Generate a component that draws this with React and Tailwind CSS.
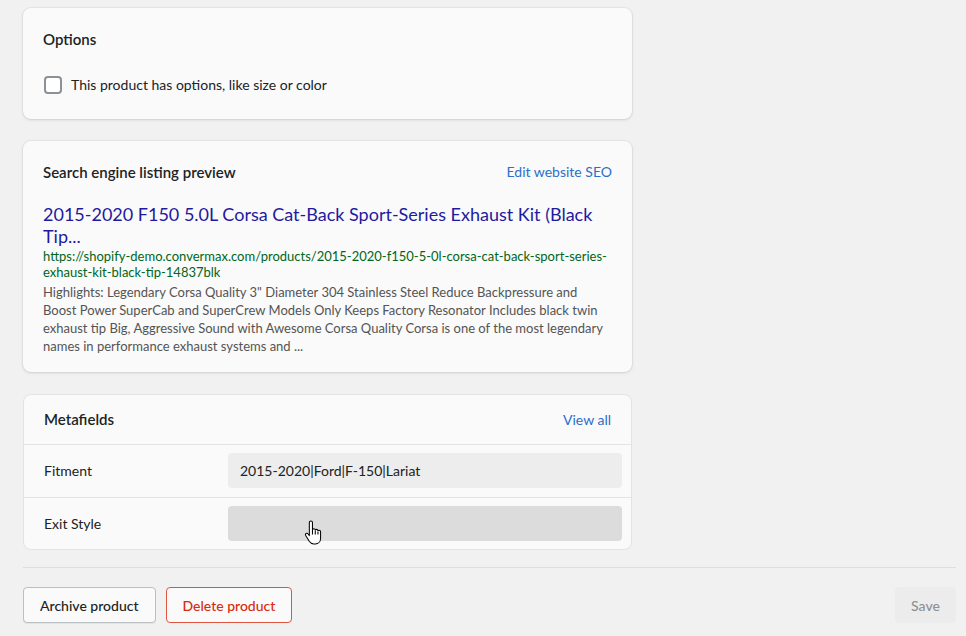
import { useState } from 'react'

const font = { fontFamily: 'Lato, "Noto Sans", sans-serif' }

function Card({ children, className = '' }) {
  return (
    <div className={`rounded-lg bg-[#fafafa] shadow-[0_0_0_1px_rgba(63,63,68,0.05),0_1px_3px_0_rgba(63,63,68,0.15)] ${className}`}>
      {children}
    </div>
  )
}

function HandCursor({ className }) {
  return (
    <svg className={className} width="19" height="26" viewBox="0 0 18 25">
      <path
        d="M6.5 1c.9 0 1.5.6 1.5 1.5V9c.3-.4.8-.6 1.3-.6.8 0 1.3.5 1.4 1.1.3-.3.7-.5 1.2-.5.8 0 1.3.6 1.4 1.2.3-.2.6-.3 1-.3.9 0 1.5.7 1.5 1.5V17.5c0 3-2 5.5-5 5.5H9.2c-2 0-3.3-1-4.3-2.5L1.5 15c-.5-.8-.3-1.6.3-2 .7-.4 1.5-.2 2 .5L5 15V2.5C5 1.6 5.6 1 6.5 1z"
        fill="#fff"
        stroke="#000"
        strokeWidth="1"
        strokeLinejoin="round"
      />
      <path d="M8 9v5M10.7 10v4M13.3 11v3" stroke="#000" strokeWidth="1" />
    </svg>
  )
}

export default function App() {
  const [hasOptions, setHasOptions] = useState(false)

  return (
    <div className="min-h-[636px] w-[966px] bg-[#f1f1f1] text-[#202223]" style={font}>
      <div className="w-[609px] ml-[23px] pt-[8px] flex flex-col gap-[22px]">
        {/* Options */}
        <Card className="px-5 pt-[21px] pb-[24px]">
          <h2 className="text-[15px] font-semibold leading-5">Options</h2>
          <label className="mt-[26px] flex items-center gap-[9px] text-[14px] leading-5 cursor-pointer">
            <input
              type="checkbox"
              checked={hasOptions}
              onChange={e => setHasOptions(e.target.checked)}
              className="appearance-none w-[18px] h-[18px] rounded-[4px] border-2 border-[#8c9196] bg-white ml-[1px]"
            />
            This product has options, like size or color
          </label>
        </Card>

        {/* SEO preview */}
        <Card className="px-5 pt-[21px] pb-[17px]">
          <div className="flex items-center justify-between">
            <h2 className="text-[15px] font-semibold leading-5">Search engine listing preview</h2>
            <a className="text-[14px] text-[#2c6ecb] leading-5">Edit website SEO</a>
          </div>
          <div className="mt-[21px] text-[18px] leading-[22px] text-[#1f1a9e]">
            2015-2020 F150 5.0L Corsa Cat-Back Sport-Series Exhaust Kit (Black Tip...
          </div>
          <div className="mt-[1px] text-[13px] leading-4 text-[#006621] break-all">
            https://shopify-demo.convermax.com/products/2015-2020-f150-5-0l-corsa-cat-back-sport-series-exhaust-kit-black-tip-14837blk
          </div>
          <p className="mt-[3px] text-[13px] leading-[18px] text-[#545454]">
            Highlights: Legendary Corsa Quality 3" Diameter 304 Stainless Steel Reduce Backpressure and Boost Power SuperCab and SuperCrew Models Only Keeps Factory Resonator Includes black twin exhaust tip Big, Aggressive Sound with Awesome Corsa Quality Corsa is one of the most legendary names in performance exhaust systems and ...
          </p>
        </Card>

        {/* Metafields */}
        <div className="rounded-lg bg-[#fafafa] border border-[#e1e3e5]">
          <div className="flex items-center justify-between px-5 h-[49px]">
            <h2 className="text-[15px] font-semibold">Metafields</h2>
            <a className="text-[14px] text-[#2c6ecb]">View all</a>
          </div>
          <div className="border-t border-[#e1e3e5] grid grid-cols-[184px_1fr] items-center px-5 pr-[9px] h-[53px]">
            <span className="text-[14px] -mt-[2px]">Fitment</span>
            <div className="h-[35px] -mt-[2px] rounded-[4px] bg-[#ededed] flex items-center px-3 text-[14px]">
              2015-2020|Ford|F-150|Lariat
            </div>
          </div>
          <div className="border-t border-[#e1e3e5] grid grid-cols-[184px_1fr] items-center px-5 pr-[9px] h-[52px]">
            <span className="text-[14px] -mt-[1px]">Exit Style</span>
            <div className="relative h-[35px] -mt-[1px] rounded-[4px] bg-[#dcdcdd]">
              <HandCursor className="absolute left-[76px] top-[14px]" />
            </div>
          </div>
        </div>
      </div>

      {/* Footer */}
      <div className="ml-[23px] mr-[10px] mt-[17px] border-t border-[#dcdee0]" />
      <div className="flex items-center justify-between ml-[23px] mr-[10px] mt-[19px]">
        <div className="flex gap-[10px]">
          <button className="h-[36px] px-4 rounded-[4px] border border-[#babfc3] bg-[#fafafa] text-[14px] font-medium text-[#202223] shadow-[0_1px_0_rgba(0,0,0,0.05)]">
            Archive product
          </button>
          <button className="h-[36px] px-4 rounded-[4px] border border-[#e0553f] bg-[#fafafa] text-[14px] font-medium text-[#d72c0d]">
            Delete product
          </button>
        </div>
        <button className="h-[36px] w-[61px] rounded-[4px] bg-[#ececec] text-[14px] font-medium text-[#8c9196]">
          Save
        </button>
      </div>
    </div>
  )
}
